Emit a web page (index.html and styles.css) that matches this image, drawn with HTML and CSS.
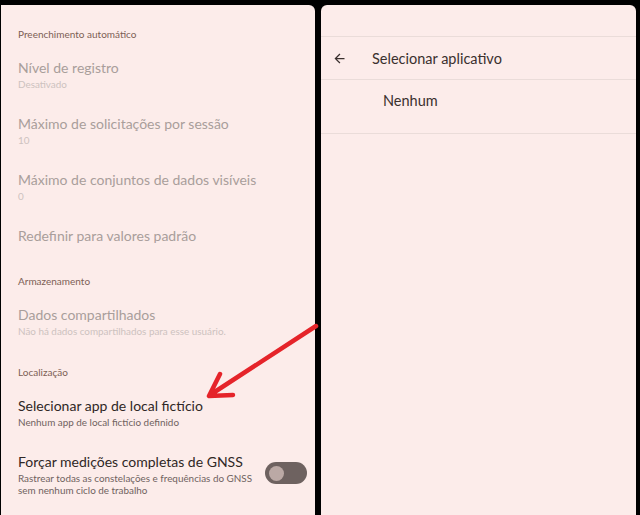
FILE: index.html
```html
<!DOCTYPE html>
<html lang="pt-BR">
<head>
<meta charset="utf-8">
<title>Opções do desenvolvedor</title>
<link rel="stylesheet" href="styles.css">
</head>
<body>
<div class="stage">
  <section class="panel panel-left">
    <div class="group-title first">Preenchimento automático</div>
    <div class="item disabled">
      <div class="item-title">Nível de registro</div>
      <div class="item-sub">Desativado</div>
    </div>
    <div class="item disabled">
      <div class="item-title">Máximo de solicitações por sessão</div>
      <div class="item-sub">10</div>
    </div>
    <div class="item disabled">
      <div class="item-title">Máximo de conjuntos de dados visíveis</div>
      <div class="item-sub">0</div>
    </div>
    <div class="item disabled">
      <div class="item-title">Redefinir para valores padrão</div>
    </div>

    <div class="group-title">Armazenamento</div>
    <div class="item disabled">
      <div class="item-title">Dados compartilhados</div>
      <div class="item-sub">Não há dados compartilhados para esse usuário.</div>
    </div>

    <div class="group-title">Localização</div>
    <div class="item">
      <div class="item-title">Selecionar app de local fictício</div>
      <div class="item-sub">Nenhum app de local fictício definido</div>
    </div>
    <div class="item item-switch">
      <div class="item-text">
        <div class="item-title">Forçar medições completas de GNSS</div>
        <div class="item-sub">Rastrear todas as constelações e frequências do GNSS sem nenhum ciclo de trabalho</div>
      </div>
      <div class="switch"><span class="knob"></span></div>
    </div>
  </section>

  <section class="panel panel-right">
    <div class="status-space"></div>
    <div class="app-bar">
      <svg class="back" viewBox="0 0 24 24" width="16" height="16" aria-hidden="true">
        <path d="M20 11H7.83l5.59-5.59L12 4l-8 8 8 8 1.41-1.41L7.83 13H20v-2z" fill="#3a302e"/>
      </svg>
      <span class="app-title">Selecionar aplicativo</span>
    </div>
    <div class="choice">Nenhum</div>
  </section>

  <svg class="pointer" viewBox="0 0 640 515" width="640" height="515" aria-hidden="true">
    <path d="M316 326 L210 395 M220 374 L209 396 L233 395" fill="none" stroke="#e5242a" stroke-width="4.5" stroke-linecap="round" stroke-linejoin="round"/>
  </svg>
</div>
</body>
</html>
```

FILE: styles.css
```css
html, body {
  margin: 0;
  padding: 0;
  background: #000;
}

.stage {
  position: relative;
  width: 640px;
  height: 515px;
  overflow: hidden;
  display: flex;
  gap: 6px;
  padding: 5px 4px 0 1px;
  box-sizing: border-box;
  font-family: Lato, "Noto Sans", sans-serif;
}

.panel {
  background: #fcecea;
  height: 100%;
}

.panel-left {
  width: 314px;
  border-top-right-radius: 6px;
  padding-left: 17px;
  padding-right: 8px;
  box-sizing: border-box;
}

.panel-right {
  flex: 1;
  border-top-left-radius: 6px;
  border-top-right-radius: 6px;
}

/* settings list */
.group-title {
  font-size: 10px;
  line-height: 14px;
  color: #7c5f55;
  padding: 16px 0 5px;
}

.group-title.first {
  padding-top: 22px;
}

.item {
  padding: 12px 0;
}

.item-title {
  font-size: 14px;
  line-height: 20px;
  color: #2f2725;
}

.item-sub {
  font-size: 9.9px;
  line-height: 12px;
  color: #6f6260;
}

.item.disabled .item-title {
  color: #a99e9b;
}

.item.disabled .item-sub {
  color: #cdc2bf;
}

.item-switch {
  display: flex;
  align-items: flex-start;
  gap: 10px;
}

.item-text {
  flex: 1;
}

.item-switch .item-sub {
  max-width: 240px;
}

.switch {
  width: 42px;
  height: 22px;
  border-radius: 11px;
  background: #6e6260;
  margin-top: 10px;
  display: flex;
  align-items: center;
  padding-left: 4px;
  box-sizing: border-box;
  flex-shrink: 0;
}

.knob {
  width: 15px;
  height: 15px;
  border-radius: 50%;
  background: #bba9a5;
}

/* app picker */
.status-space {
  height: 31px;
  border-bottom: 1px solid #eadcd9;
}

.app-bar {
  height: 42px;
  display: flex;
  align-items: center;
  border-bottom: 1px solid #eadcd9;
}

.back {
  margin-left: 11px;
  width: 15px;
  height: 15px;
}

.app-title {
  margin-left: 25px;
  font-size: 14.5px;
  color: #3a302e;
}

.choice {
  height: 54px;
  box-sizing: border-box;
  padding: 10px 0 0 62px;
  line-height: 22px;
  font-size: 14.5px;
  color: #3a302e;
  border-bottom: 1px solid #eadcd9;
}

/* annotation drawn over the screenshots */
.pointer {
  position: absolute;
  left: 0;
  top: 0;
  pointer-events: none;
}
```
